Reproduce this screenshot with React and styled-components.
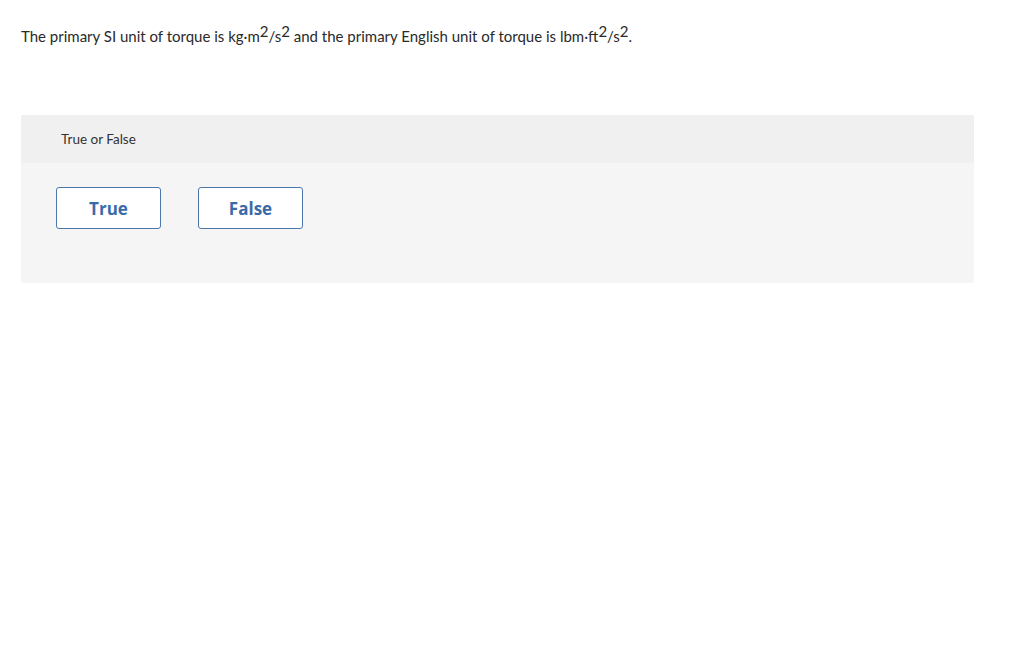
import React from "react";
import styled, { createGlobalStyle } from "styled-components";

const Global = createGlobalStyle`
  html, body { margin: 0; padding: 0; background: #fff; }
  body { font-family: Lato, "Open Sans", Arial, sans-serif; color: #333; }
`;

const Page = styled.div`
  padding: 22px 50px 0 21px;
`;

const Prompt = styled.p`
  margin: 0;
  font-size: 15px;
  line-height: 28px;
  color: #2a2a2a;
`;

const Sup = styled.sup`
  font-size: 15px;
  line-height: 0;
  vertical-align: 5px;
`;

const Panel = styled.section`
  margin-top: 65px;
  width: 953px;
  background: #f5f5f5;
  border-radius: 2px;
  overflow: hidden;
`;

const PanelHeader = styled.div`
  height: 48px;
  display: flex;
  align-items: center;
  padding-left: 40px;
  background: #f0f0f0;
  font-size: 13.5px;
  color: #333;
`;

const Choices = styled.div`
  display: flex;
  gap: 37px;
  padding: 24px 35px 54px;
`;

const Choice = styled.button`
  width: 105px;
  height: 42px;
  display: flex;
  align-items: center;
  justify-content: center;
  border: 1px solid #4a77ae;
  border-radius: 3px;
  background: #fff;
  color: #3a6ba8;
  font-family: "Open Sans", Lato, Arial, sans-serif;
  font-weight: 700;
  font-size: 17px;
  line-height: 1;
  cursor: pointer;
  padding: 0;
`;

export default function App() {
  return (
    <>
      <Global />
      <Page>
        <Prompt>
          The primary SI unit of torque is kg·m<Sup>2</Sup>/s<Sup>2</Sup> and the
          primary English unit of torque is lbm·ft<Sup>2</Sup>/s<Sup>2</Sup>.
        </Prompt>
        <Panel>
          <PanelHeader>True or False</PanelHeader>
          <Choices>
            <Choice>True</Choice>
            <Choice>False</Choice>
          </Choices>
        </Panel>
      </Page>
    </>
  );
}
